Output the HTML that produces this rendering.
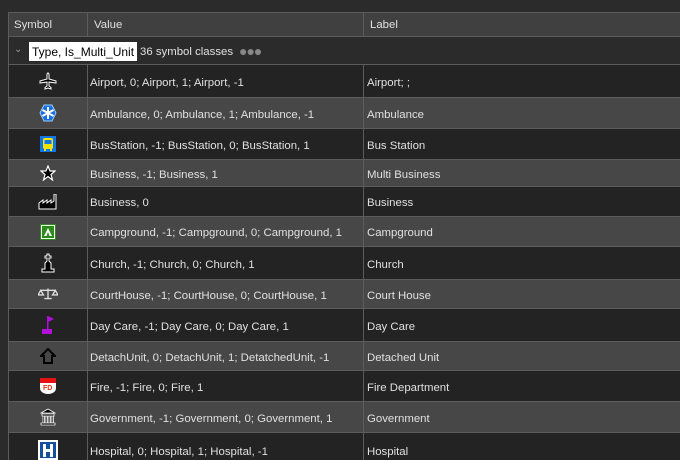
<!DOCTYPE html>
<html><head><style>
body{margin:0;width:680px;height:460px;background:#2b2b2b;overflow:hidden;font-family:"Liberation Sans",sans-serif;font-size:11.4px;color:#e0e0e0;position:relative}
.a{position:absolute}
.r{position:absolute;left:8px;width:672px;border-bottom:1px solid #5c5c5c;box-sizing:border-box}
.d{background:#232323}.l{background:#474747}
.t{position:absolute;top:3px;bottom:0;display:flex;align-items:center;white-space:nowrap}
.v{left:82px}.lb{left:359px}
.ic{position:absolute;left:30px;top:0;bottom:0;width:20px;display:flex;align-items:center;justify-content:center}
.vl{position:absolute;top:12px;width:1px;height:448px;background:#5c5c5c}
</style></head><body>
<div class="a" style="left:8px;top:12px;width:672px;height:25px;background:#404040;border-top:1px solid #5c5c5c;border-bottom:1px solid #5c5c5c;box-sizing:border-box">
<span class="a" style="left:6px;top:6px">Symbol</span>
<span class="a" style="left:86px;top:6px">Value</span>
<span class="a" style="left:362px;top:6px">Label</span>
</div>
<div class="r" style="top:37px;height:28px;background:#2b2b2b">
<span class="a" style="left:6px;top:7px;color:#999;font-size:10px">&#8964;</span>
<span class="a" style="left:21px;top:5px;height:19px;padding:0 3px;background:#fff;color:#000;line-height:20px;font-size:12px">Type, Is_Multi_Unit</span>
<span class="a" style="left:132px;top:9px">36 symbol classes</span>
<span class="a" style="left:231px;top:6px;color:#888;font-size:14px;letter-spacing:-1px">●●●</span>
</div>

<div class="r d" style="top:65px;height:33px"><div class="ic"><svg width="20" height="20" viewBox="0 0 20 20"><path d="M10 2c1 0 1 1 1 3v3l7 2v2l-7-1v4l2 1.5v1.5l-3-1-3 1v-1.5l2-1.5v-4l-7 1v-2l7-2v-3c0-2 0-3 1-3z" fill="#000" stroke="#fff" stroke-width="1"/></svg></div><span class="t v">Airport, 0; Airport, 1; Airport, -1</span><span class="t lb">Airport; ;</span></div>
<div class="r l" style="top:98px;height:31px"><div class="ic"><svg width="18" height="18" viewBox="0 0 18 18"><polygon points="5,1 13,1 17,9 13,17 5,17 1,9" fill="#1a6fe0" stroke="#9cf"/><path d="M9 3v12M3.5 6l11 6M3.5 12l11-6" stroke="#fff" stroke-width="2"/></svg></div><span class="t v">Ambulance, 0; Ambulance, 1; Ambulance, -1</span><span class="t lb">Ambulance</span></div>
<div class="r d" style="top:129px;height:31px"><div class="ic"><svg width="16" height="16"><rect width="16" height="16" fill="#1177e8"/><rect x="3" y="2" width="10" height="11" rx="2" fill="#f4e300"/><rect x="4.5" y="4" width="7" height="4" fill="#1177e8"/><rect x="4" y="13" width="2" height="2" fill="#f4e300"/><rect x="10" y="13" width="2" height="2" fill="#f4e300"/></svg></div><span class="t v">BusStation, -1; BusStation, 0; BusStation, 1</span><span class="t lb">Bus Station</span></div>
<div class="r l" style="top:160px;height:27px"><div class="ic"><svg width="16" height="16" viewBox="0 0 16 16"><polygon points="8,1 10,6 15,6 11,9.5 12.5,15 8,11.5 3.5,15 5,9.5 1,6 6,6" fill="#000" stroke="#fff" stroke-width="1.2"/></svg></div><span class="t v">Business, -1; Business, 1</span><span class="t lb">Multi Business</span></div>
<div class="r d" style="top:187px;height:30px"><div class="ic"><svg width="20" height="16" viewBox="0 0 20 16"><path d="M1 15v-6l4-3v3l4-3v3l4-3v3l3-2v-7h2v15z" fill="#000" stroke="#fff" stroke-width="1"/></svg></div><span class="t v">Business, 0</span><span class="t lb">Business</span></div>
<div class="r l" style="top:217px;height:30px"><div class="ic"><svg width="16" height="16"><rect x="0.5" y="0.5" width="15" height="15" fill="#fff" stroke="#2a8a1a"/><rect x="2" y="2" width="12" height="12" fill="#2a8a1a"/><polygon points="8,4 12,12 4,12" fill="#fff"/><polygon points="8,8 9.5,12 6.5,12" fill="#2a8a1a"/></svg></div><span class="t v">Campground, -1; Campground, 0; Campground, 1</span><span class="t lb">Campground</span></div>
<div class="r d" style="top:247px;height:33px"><div class="ic"><svg width="14" height="20" viewBox="0 0 14 20"><path d="M6 1h2v2h2v2h-2v3l2 2v6h3v3h-12v-3h3v-6l2-2v-3h-2v-2h2z" fill="#000" stroke="#fff"/></svg></div><span class="t v">Church, -1; Church, 0; Church, 1</span><span class="t lb">Church</span></div>
<div class="r l" style="top:280px;height:29px"><div class="ic"><svg width="22" height="14" viewBox="0 0 22 14"><path d="M11 1v11M3 3h16M3 3l-3 5h6zM19 3l-3 5h6zM7 12h8" stroke="#ddd" stroke-width="1.5" fill="#444"/></svg></div><span class="t v">CourtHouse, -1; CourtHouse, 0; CourtHouse, 1</span><span class="t lb">Court House</span></div>
<div class="r d" style="top:309px;height:33px"><div class="ic"><svg width="12" height="20"><rect x="5" y="1" width="1.5" height="14" fill="#b010d8"/><polygon points="6,1 12,4 6,7" fill="#b010d8"/><rect x="0" y="14" width="10" height="5" fill="#b010d8"/></svg></div><span class="t v">Day Care, -1; Day Care, 0; Day Care, 1</span><span class="t lb">Day Care</span></div>
<div class="r l" style="top:342px;height:29px"><div class="ic"><svg width="16" height="16" viewBox="0 0 16 16"><path d="M8 1l7 7h-3v7h-8v-7h-3z" fill="none" stroke="#000" stroke-width="2"/></svg></div><span class="t v">DetachUnit, 0; DetachUnit, 1; DetatchedUnit, -1</span><span class="t lb">Detached Unit</span></div>
<div class="r d" style="top:371px;height:31px"><div class="ic"><svg width="18" height="18"><path d="M1 5h16v6c0 4-4 6-8 6s-8-2-8-6z" fill="#fff"/><rect x="1" y="1" width="16" height="5" fill="#e81010"/><text x="4" y="13" font-size="7" fill="#e83010" font-family="Liberation Sans" font-weight="bold">FD</text></svg></div><span class="t v">Fire, -1; Fire, 0; Fire, 1</span><span class="t lb">Fire Department</span></div>
<div class="r l" style="top:402px;height:31px"><div class="ic"><svg width="16" height="18" viewBox="0 0 16 18"><path d="M8 1l7 4h-14z M2 6h12v2h-12z M3 8h1.5v7h-1.5zM6 8h1.5v7h-1.5zM9 8h1.5v7h-1.5zM12 8h1.5v7h-1.5zM1 15h14v2h-14z" fill="#000" stroke="#fff" stroke-width="0.8"/></svg></div><span class="t v">Government, -1; Government, 0; Government, 1</span><span class="t lb">Government</span></div>
<div class="r d" style="top:433px;height:27px;border:none"><div class="ic" style="align-items:flex-end"><svg width="20" height="20"><rect width="20" height="20" fill="#fff"/><rect x="2" y="2" width="16" height="16" fill="#1450a0"/><rect x="5" y="4" width="3" height="13" fill="#fff"/><rect x="12" y="4" width="3" height="13" fill="#fff"/><rect x="5" y="9" width="10" height="3" fill="#fff"/></svg></div><span class="t v" style="top:10px">Hospital, 0; Hospital, 1; Hospital, -1</span><span class="t lb" style="top:10px">Hospital</span></div>

<div class="vl" style="left:8px"></div>
<div class="vl" style="left:87px;height:25px"></div>
<div class="vl" style="left:363px;height:25px"></div>
<div class="vl" style="left:87px;top:65px;height:395px"></div>
<div class="vl" style="left:363px;top:65px;height:395px"></div>
</body></html>
